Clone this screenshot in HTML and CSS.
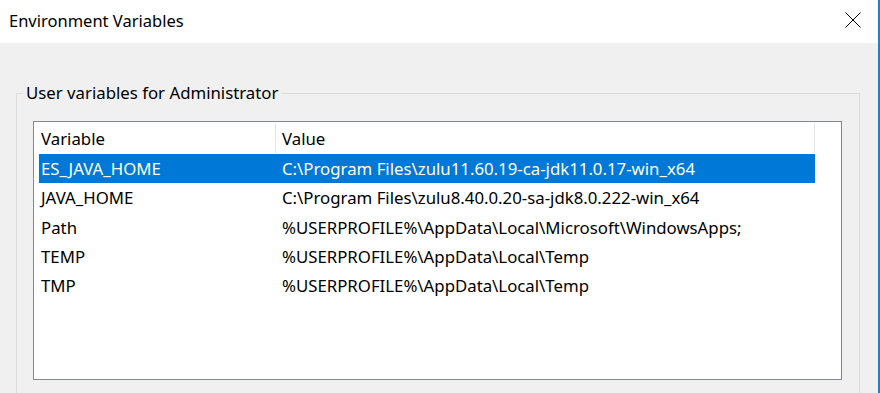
FILE: index.html
```html
<!DOCTYPE html>
<html>
<head>
<meta charset="utf-8">
<link rel="stylesheet" href="styles.css">
<title>Environment Variables</title>
</head>
<body>
<div class="window">
  <div class="titlebar">
    <span class="title">Environment Variables</span>
    <span class="close" aria-label="Close">
      <svg width="16" height="16" viewBox="0 0 16 16"><path d="M0.5 0.5 L15.5 15.5 M15.5 0.5 L0.5 15.5" stroke="#000" stroke-width="1" fill="none"/></svg>
    </span>
  </div>
  <div class="content">
    <fieldset class="group">
      <legend class="group-label">User variables for Administrator</legend>
      <div class="group-body">
        <div class="listview">
          <div class="lv-header">
            <div class="lv-hcell lv-hcell-name">Variable</div>
            <div class="lv-hcell lv-hcell-value">Value</div>
          </div>
          <div class="lv-rows">
            <div class="lv-row selected"><span class="lv-name">ES_JAVA_HOME</span><span class="lv-value">C:\Program Files\zulu11.60.19-ca-jdk11.0.17-win_x64</span></div>
            <div class="lv-row"><span class="lv-name">JAVA_HOME</span><span class="lv-value">C:\Program Files\zulu8.40.0.20-sa-jdk8.0.222-win_x64</span></div>
            <div class="lv-row"><span class="lv-name">Path</span><span class="lv-value">%USERPROFILE%\AppData\Local\Microsoft\WindowsApps;</span></div>
            <div class="lv-row"><span class="lv-name">TEMP</span><span class="lv-value">%USERPROFILE%\AppData\Local\Temp</span></div>
            <div class="lv-row"><span class="lv-name">TMP</span><span class="lv-value">%USERPROFILE%\AppData\Local\Temp</span></div>
          </div>
        </div>
      </div>
    </fieldset>
  </div>
</div>
</body>
</html>
```

FILE: styles.css
```css
html, body {
  margin: 0;
  padding: 0;
  background: #ffffff;
}
body {
  font-family: "Noto Sans", "Open Sans", sans-serif;
  font-size: 16.8px;
  color: #000;
  overflow: hidden;
}
.window {
  position: relative;
  width: 878px;
  height: 393px;
  background: #f0f0f0;
  border-right: 2px solid #1883d7;
  overflow: hidden;
}
.window::after {
  content: "";
  position: absolute;
  right: -2px;
  top: 84px;
  width: 1px;
  height: 59px;
  background: #111;
}
.titlebar {
  height: 43px;
  background: #fff;
  display: flex;
  align-items: center;
  justify-content: space-between;
  padding: 0 17px 0 9px;
}
.title {
  font-size: 16.5px;
  line-height: 20px;
  margin-top: -1px;
}
.close {
  display: flex;
  width: 16px;
  height: 16px;
  margin-top: -3px;
}
.content {
  padding: 39px 18px 0 16px;
}
.group {
  margin: 0;
  padding: 0;
  border: 1px solid #dcdcdc;
  min-width: 0;
}
.group-label {
  margin-left: 6px;
  padding: 0 3px;
  line-height: 22px;
}
.group-body {
  padding: 17px 17px 40px 16px;
}
.listview {
  height: 259px;
  box-sizing: border-box;
  border: 1px solid #828790;
  background: #fff;
}
.lv-header {
  display: flex;
  height: 32px;
}
.lv-hcell {
  box-sizing: border-box;
  border-right: 1px solid #e5e5e5;
  margin-top: 1px;
  height: 30px;
  padding-top: 5px;
  line-height: 22px;
  white-space: nowrap;
}
.lv-hcell-name {
  width: 242px;
  padding-left: 7px;
}
.lv-hcell-value {
  width: 539px;
  padding-left: 6px;
}
.lv-rows {
  padding-left: 5px;
}
.lv-row {
  display: flex;
  width: 776px;
  height: 29.25px;
  align-items: center;
  white-space: nowrap;
}
.lv-row.selected {
  background: #0078d7;
  color: #fff;
}
.lv-name {
  width: 243px;
  padding-left: 2px;
  box-sizing: border-box;
}
.lv-value {
  flex: 1;
}
```
